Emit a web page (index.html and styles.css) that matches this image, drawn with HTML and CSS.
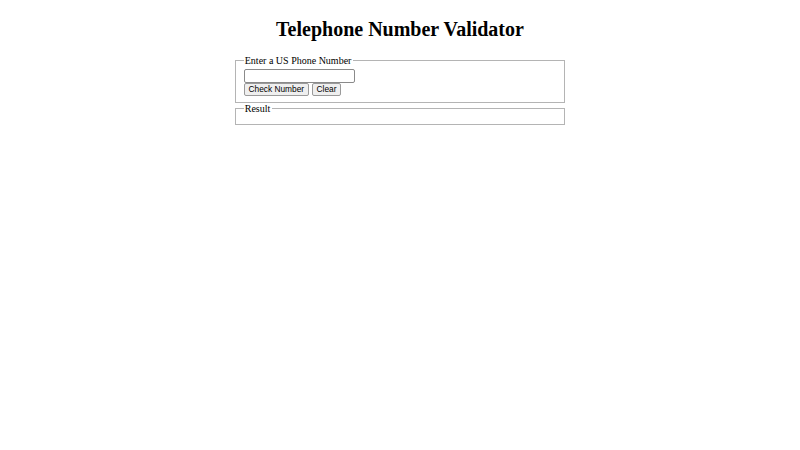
FILE: index.html
```html
<!DOCTYPE html>
<html lang="en">
<head>
  <meta charset="UTF-8">
  <title>Telephone Number Validator</title>
  <link rel="stylesheet" href="styles.css">
</head>
<body>
  <h1>Telephone Number Validator</h1>

  <div class="container">
    <fieldset>
      <legend>Enter a US Phone Number</legend>
      <input type="text" id="user-input">
      <br>
      <button id="check-btn">Check Number</button>
      <button id="clear-btn">Clear</button>
    </fieldset>

    <fieldset class="result">
      <legend>Result</legend>
      <div id="results-div"></div>
    </fieldset>
  </div>
</body>
</html>
```

FILE: styles.css
```css
body {
  font-family: "Liberation Serif", serif;
  font-size: 10px;
  margin: 5px;
  display: flow-root;
}

h1 {
  text-align: center;
  font-size: 20px;
  margin: 13.4px 0;
}

.container {
  width: 330px;
  margin: 0 auto;
}

fieldset {
  margin: 0;
  padding: 3.5px 7.5px 6.25px;
  border: 1px solid #b4b4b4;
}

legend {
  padding: 0 1.25px;
}

input,
button {
  font-family: "Liberation Sans", sans-serif;
  font-size: 8.33px;
  box-sizing: border-box;
  margin: 0;
  vertical-align: top;
}

#user-input {
  width: 111px;
  height: 13.5px;
  padding: 0 1.5px;
  border: 1px solid #8a8a8a;
  border-radius: 2px;
}

button {
  height: 13px;
  background: #efefef;
  border: 1px solid #9a9a9a;
  border-radius: 2px;
  padding: 0 4px;
}
```
